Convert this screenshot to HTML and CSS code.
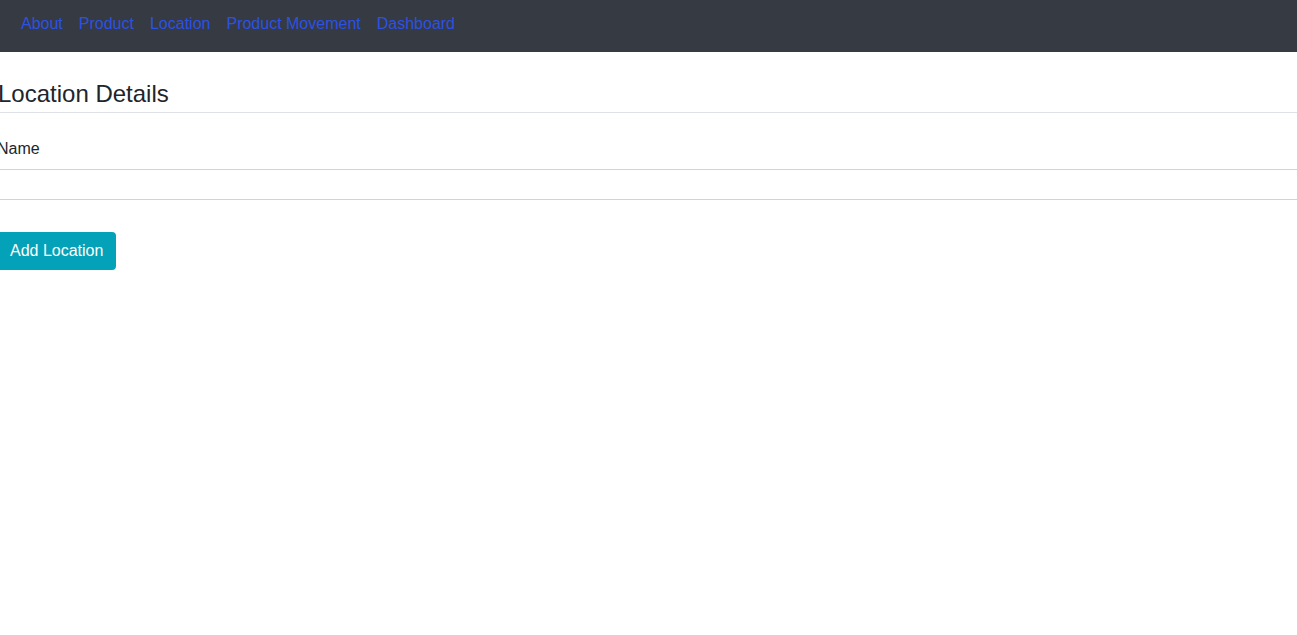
FILE: index.html
```html
<!DOCTYPE html>
<html lang="en">
<head>
<meta charset="utf-8">
<title>Location Details</title>
<link rel="stylesheet" href="styles.css">
</head>
<body>
<nav class="navbar">
  <a class="nav-link" href="#">About</a>
  <a class="nav-link" href="#">Product</a>
  <a class="nav-link" href="#">Location</a>
  <a class="nav-link" href="#">Product Movement</a>
  <a class="nav-link" href="#">Dashboard</a>
</nav>
<main class="content">
  <h4 class="page-title">Location Details</h4>
  <div class="field-label">Name</div>
  <div class="field-row"></div>
  <button class="btn-info" type="button">Add Location</button>
</main>
</body>
</html>
```

FILE: styles.css
```css
html, body {
  margin: 0;
  padding: 0;
  background: #ffffff;
  font-family: "Liberation Sans", Arial, sans-serif;
  font-size: 16px;
  color: #212529;
  overflow: hidden;
}

.navbar {
  display: flex;
  align-items: center;
  height: 52px;
  padding: 0 13px;
  background: #363a42;
  box-sizing: border-box;
}

.nav-link {
  padding: 0 8px;
  color: #2b52e4;
  text-decoration: none;
  line-height: 24px;
  margin-top: -5px;
}

.content {
  display: flex;
  flex-direction: column;
  align-items: flex-start;
}

.page-title {
  align-self: stretch;
  margin: 27px 0 0;
  padding-bottom: 4px;
  font-size: 24px;
  font-weight: 500;
  line-height: 29px;
  text-indent: -2px;
  border-bottom: 1px solid #dee2e6;
}

.field-label {
  align-self: stretch;
  margin-top: 24px;
  padding-bottom: 8px;
  line-height: 24px;
  text-indent: -3px;
  border-bottom: 1px solid #ced4da;
}

.field-row {
  align-self: stretch;
  height: 29px;
  border-bottom: 1px solid #ced4da;
}

.btn-info {
  margin-top: 32px;
  height: 38px;
  padding: 0 13px 0 10px;
  border: none;
  border-radius: 0 4px 4px 0;
  background: #03a2b8;
  color: #ffffff;
  font-family: "Liberation Sans", Arial, sans-serif;
  font-size: 16px;
  line-height: 24px;
  cursor: pointer;
}
```
